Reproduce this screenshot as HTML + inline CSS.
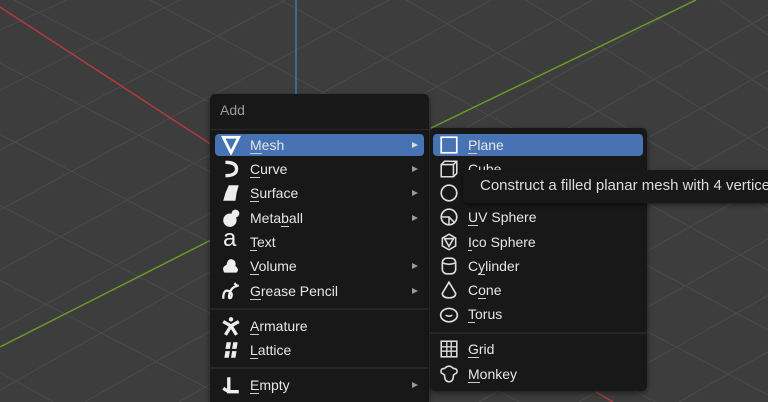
<!DOCTYPE html>
<html><head><meta charset="utf-8"><style>
body{margin:0;width:768px;height:402px;overflow:hidden;background:#3d3d3d;font-family:"Liberation Sans","DejaVu Sans",sans-serif;position:relative}
.m{position:absolute;background:#181818;border-radius:5px;box-shadow:0 2px 6px rgba(0,0,0,.5);overflow:hidden}
.r{position:absolute;left:5px;height:22px;color:#e6e6e6;font-size:14px;line-height:22px;padding-left:35px;box-sizing:border-box}
.hl{background:#4772b3;border-radius:4px}
.r u{text-decoration:none;border-bottom:1px solid #ccc}
.ar{position:absolute;right:6px;top:8px;width:0;height:0;border-left:6px solid #9a9a9a;border-top:3.5px solid transparent;border-bottom:3.5px solid transparent}
.hl .ar{border-left-color:#ddd}
.ic{position:absolute;left:6px;top:1px;width:20px;height:20px}
.sep{position:absolute;left:0;right:0;height:2px;background:#262626}
</style></head><body>
<svg width="768" height="402" style="position:absolute;left:0;top:0">
<g stroke="#4b4b4b" stroke-width="1">
<path d="M-400 0 L768 600 M-300 -20 L768 530 M-200 -40 L768 460 M-100 -60 L768 395 M0 -80 L768 330 M100 -100 L768 270 M200 -120 L768 210 M300 -140 L768 150 M400 -150 L768 90 M500 -160 L768 35 M-500 20 L768 680 M-600 40 L700 760"/>
<path d="M0 90 L300 -60 M0 150 L400 -60 M0 210 L500 -60 M0 270 L600 -60 M0 330 L700 -60 M0 390 L800 -60 M0 450 L900 -60 M40 480 L1000 -60 M140 480 L1100 -60 M240 480 L1200 -60 M340 480 L1300 -60 M440 480 L1400 -60 M540 480 L1500 -60 M640 480 L1600 -60 M0 30 L200 -60"/>
</g>
<line x1="0" y1="7" x2="212" y2="145" stroke="#b03a42" stroke-width="1.5"/>
<line x1="596" y1="392" x2="613" y2="402" stroke="#b03a42" stroke-width="1.5"/>
<line x1="296" y1="0" x2="296" y2="95" stroke="#3e78b8" stroke-width="1.5"/>
<line x1="431" y1="128" x2="696" y2="0" stroke="#6a9a26" stroke-width="1.5"/>
<line x1="0" y1="347" x2="211" y2="240" stroke="#6a9a26" stroke-width="1.5"/>
</svg>

<div class="m" style="left:210px;top:94px;width:219px;height:308px;border-bottom-left-radius:0;border-bottom-right-radius:0">
<div style="position:absolute;left:10px;top:8px;color:#9c9c9c;font-size:14px">Add</div>
<div class="sep" style="top:35px;height:1px;background:#2a2a2a"></div>
<div class="r hl" style="top:40px;width:209px"><svg class="ic" viewBox="0 0 18 18"><path d="M2 2 L16 2 L9 16 Z" fill="none" stroke="#fff" stroke-width="2.5"/></svg><u>M</u>esh<span class="ar"></span></div>
<div class="r" style="top:64px;width:209px"><svg class="ic" viewBox="0 0 18 18"><path d="M4 3 Q14 3 14 9 Q14 15 4 15" fill="none" stroke="#eee" stroke-width="3"/></svg><u>C</u>urve<span class="ar"></span></div>
<div class="r" style="top:88px;width:209px"><svg class="ic" viewBox="0 0 18 18"><path d="M7 2 L16 2 L14 9 L13 16 L2 16 L4 9 Z" fill="#eee"/></svg><u>S</u>urface<span class="ar"></span></div>
<div class="r" style="top:113px;width:209px"><svg class="ic" viewBox="0 0 18 18"><circle cx="8" cy="11" r="6" fill="#eee"/><circle cx="13" cy="5" r="3.5" fill="#eee"/></svg>Meta<u>b</u>all<span class="ar"></span></div>
<div class="r" style="top:137px;width:209px"><span style="position:absolute;left:8px;top:-3px;font-size:24px;color:#eee">a</span><u>T</u>ext</div>
<div class="r" style="top:161px;width:209px"><svg class="ic" viewBox="0 0 18 18"><path d="M3 15 Q0 10 5 8 Q6 2 10 3 Q14 4 13 9 Q17 12 14 15 Z" fill="#eee"/></svg><u>V</u>olume<span class="ar"></span></div>
<div class="r" style="top:186px;width:209px"><svg class="ic" viewBox="0 0 18 18"><path d="M2 16 Q2 7 7 9 Q11 11 9 15 Q6 17 8 10 Q10 5 16 4 M12 2 L15 5" fill="none" stroke="#eee" stroke-width="2"/></svg><u>G</u>rease Pencil<span class="ar"></span></div>
<div class="sep" style="top:214px"></div>
<div class="r" style="top:221px;width:209px"><svg class="ic" viewBox="0 0 18 18"><circle cx="9" cy="3" r="2" fill="#eee"/><path d="M2 5 L9 9 L16 5 M9 9 L4 17 M9 9 L14 17" stroke="#eee" stroke-width="3" fill="none"/></svg><u>A</u>rmature</div>
<div class="r" style="top:245px;width:209px"><svg class="ic" viewBox="0 0 18 18"><path d="M5 2 L9 2 L8 8 L4 8 Z M11 2 L15 2 L14 8 L10 8 Z M4 10 L8 10 L7 16 L3 16 Z M10 10 L14 10 L13 16 L9 16 Z" fill="#eee"/></svg><u>L</u>attice</div>
<div class="sep" style="top:273px"></div>
<div class="r" style="top:280px;width:209px"><svg class="ic" viewBox="0 0 18 18"><path d="M7 2 L7 15 L16 15 M7 15 L2 12" stroke="#eee" stroke-width="3" fill="none"/></svg><u>E</u>mpty<span class="ar"></span></div>
</div>

<div class="m" style="left:430px;top:128px;width:217px;height:263px">
<div class="r hl" style="left:3px;top:6px;width:210px;padding-left:35px"><svg class="ic" viewBox="0 0 18 18"><rect x="2" y="2" width="14" height="14" fill="none" stroke="#fff" stroke-width="1.5"/></svg><u>P</u>lane</div>
<div class="r" style="left:3px;top:30px;width:210px"><svg class="ic" viewBox="0 0 18 18"><path d="M2 5 L5 2 L16 2 L16 13 L13 16 L2 16 Z M2 5 L13 5 L13 16 M13 5 L16 2" fill="none" stroke="#ddd" stroke-width="1.4"/></svg>Cube</div>
<div class="r" style="left:3px;top:54px;width:210px"><svg class="ic" viewBox="0 0 18 18"><circle cx="9" cy="9" r="7" fill="none" stroke="#ddd" stroke-width="1.5"/></svg>Circle</div>
<div class="r" style="left:3px;top:78px;width:210px"><svg class="ic" viewBox="0 0 18 18"><circle cx="9" cy="9" r="7" fill="none" stroke="#ddd" stroke-width="1.5"/><path d="M2 9 L9 9 L9 16 M9 9 L14 14" stroke="#ddd" stroke-width="1.4" fill="none"/></svg><u>U</u>V Sphere</div>
<div class="r" style="left:3px;top:103px;width:210px"><svg class="ic" viewBox="0 0 18 18"><path d="M9 2 L15 5.5 L15 12.5 L9 16 L3 12.5 L3 5.5 Z M5 6 L13 6 L9 13 Z" fill="none" stroke="#ddd" stroke-width="1.4"/></svg><u>I</u>co Sphere</div>
<div class="r" style="left:3px;top:127px;width:210px"><svg class="ic" viewBox="0 0 18 18"><rect x="3" y="2" width="12" height="14" rx="4" fill="none" stroke="#ddd" stroke-width="1.5"/><path d="M3 6 Q9 9 15 6" stroke="#ddd" fill="none" stroke-width="1.4"/></svg>C<u>y</u>linder</div>
<div class="r" style="left:3px;top:151px;width:210px"><svg class="ic" viewBox="0 0 18 18"><path d="M9 2 L3 12 Q3 16 9 16 Q15 16 15 12 Z" fill="none" stroke="#ddd" stroke-width="1.5"/></svg>C<u>o</u>ne</div>
<div class="r" style="left:3px;top:175px;width:210px"><svg class="ic" viewBox="0 0 18 18"><ellipse cx="9" cy="10" rx="7.5" ry="6" fill="none" stroke="#ddd" stroke-width="1.5"/><path d="M6 10 Q9 12 12 10" stroke="#ddd" fill="none" stroke-width="1.4"/></svg><u>T</u>orus</div>
<div class="sep" style="top:204px"></div>
<div class="r" style="left:3px;top:210px;width:210px"><svg class="ic" viewBox="0 0 18 18"><rect x="2" y="2" width="14" height="14" fill="none" stroke="#ddd" stroke-width="1.4"/><path d="M7 2 V16 M11 2 V16 M2 7 H16 M2 11 H16" stroke="#ddd" stroke-width="1.2"/></svg><u>G</u>rid</div>
<div class="r" style="left:3px;top:235px;width:210px"><svg class="ic" viewBox="0 0 18 18"><path d="M5 4 Q9 0 13 4 Q17 4 16 8 Q14 9 13 10 Q13 16 9 16 Q5 16 5 10 Q4 9 2 8 Q1 4 5 4 Z" fill="none" stroke="#ddd" stroke-width="1.4"/></svg><u>M</u>onkey</div>
</div>

<div style="position:absolute;left:463px;top:170px;width:305px;height:33px;background:#181818;border-radius:4px 0 0 4px;box-shadow:0 2px 5px rgba(0,0,0,.5);color:#dcdcdc;font-size:15px;line-height:31px;padding-left:17px;box-sizing:border-box;white-space:nowrap;overflow:hidden">Construct a filled planar mesh with 4 vertices</div>
</body></html>
